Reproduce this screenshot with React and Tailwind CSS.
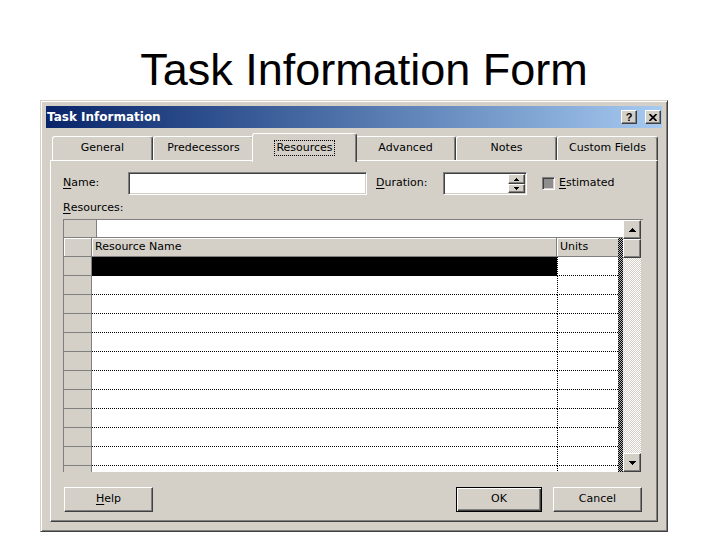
import React from "react";

const RAISED =
  "border border-t-white border-l-white border-r-[#404040] border-b-[#404040] shadow-[inset_-1px_-1px_#808080]";
const SUNKEN =
  "border border-t-[#808080] border-l-[#808080] border-r-white border-b-white shadow-[inset_1px_1px_#404040,inset_-1px_-1px_#d4d0c8]";

function U({ children }) {
  return <span className="underline decoration-1 underline-offset-[2px]">{children}</span>;
}

function Tri({ dir = "up", w = 7, h = 4 }) {
  const pts = dir === "up" ? `0,${h} ${w},${h} ${w / 2},0` : `0,0 ${w},0 ${w / 2},${h}`;
  return (
    <svg width={w} height={h} viewBox={`0 0 ${w} ${h}`} shapeRendering="crispEdges">
      <polygon points={pts} fill="#000" />
    </svg>
  );
}

const tabs = ["General", "Predecessors", "Resources", "Advanced", "Notes", "Custom Fields"];

export default function App() {
  return (
    <div className="w-[728px] h-[546px] bg-white flex flex-col overflow-hidden">
      <h1 className="pt-[47px] h-[92px] shrink-0 text-center text-[45px] leading-[45px] font-normal text-black font-['Liberation_Sans',Arial,sans-serif]">
        Task Information Form
      </h1>

      <div className="mt-[8px] ml-[40px] w-[628px] h-[432px] shrink-0 bg-[#d4d0c8] border border-t-[#d4d0c8] border-l-[#d4d0c8] border-r-[#404040] border-b-[#404040] shadow-[inset_1px_1px_#ffffff,inset_-1px_-1px_#808080] flex flex-col pt-[5px] px-[5px] font-['DejaVu_Sans',sans-serif] text-[11px] text-black">
        {/* Title bar */}
        <div className="h-[22px] shrink-0 bg-linear-to-r from-[#0a246a] to-[#a6caf0] flex items-center pl-[1px] pr-[1px]">
          <span className="font-bold text-white text-[12px] font-['DejaVu_Sans',sans-serif]">Task Information</span>
          <div className="ml-auto flex items-center">
            <div className={`w-[16px] h-[14px] bg-[#d4d0c8] ${RAISED} flex items-center justify-center mr-[8px]`}>
              <span className="font-bold text-[11px] leading-none font-['Liberation_Sans',sans-serif]">?</span>
            </div>
            <div className={`w-[16px] h-[14px] bg-[#d4d0c8] ${RAISED} flex items-center justify-center`}>
              <svg width="8" height="7" viewBox="0 0 8 7">
                <path d="M0.5 0 L7.5 7 M7.5 0 L0.5 7" stroke="#000" strokeWidth="1.7" />
              </svg>
            </div>
          </div>
        </div>

        {/* Tabs + panel */}
        <div className="mt-[5px] mx-[4px] flex flex-col">
          <div className="h-[27px] flex items-end pl-[2px]">
            {tabs.map((t) =>
              t === "Resources" ? (
                <div
                  key={t}
                  className="relative z-10 w-[105px] h-[29px] -mx-[2px] -mb-[2px] bg-[#d4d0c8] border-t border-l border-r border-t-white border-l-white border-r-[#404040] rounded-t-[3px] shadow-[inset_-1px_0_#808080] flex items-start justify-center pt-[6px]"
                >
                  <span className="border border-dotted border-black px-[1px] leading-[14px]">{t}</span>
                </div>
              ) : (
                <div
                  key={t}
                  className="w-[101px] h-[24px] border-t border-l border-r border-t-white border-l-white border-r-[#404040] rounded-t-[3px] shadow-[inset_-1px_0_#808080] flex items-center justify-center"
                >
                  {t}
                </div>
              )
            )}
          </div>

          <div className="h-[362px] border border-t-white border-l-white border-r-[#404040] border-b-[#404040] shadow-[inset_-1px_-1px_#808080] flex flex-col px-[12px] pt-[11px]">
            {/* Row 1 */}
            <div className="h-[23px] flex items-center">
              <div className="w-[65px]">
                <U>N</U>ame:
              </div>
              <div className={`w-[239px] h-[23px] bg-white ${SUNKEN}`} />
              <div className="ml-[9px] w-[67px]">
                <U>D</U>uration:
              </div>
              <div className={`w-[84px] h-[23px] bg-white ${SUNKEN} flex p-[1px]`}>
                <div className="flex-1" />
                <div className="w-[17px] flex flex-col">
                  <div className={`h-[10px] bg-[#d4d0c8] ${RAISED} flex items-center justify-center`}>
                    <Tri dir="up" w={5} h={3} />
                  </div>
                  <div className={`flex-1 bg-[#d4d0c8] ${RAISED} flex items-center justify-center`}>
                    <Tri dir="down" w={5} h={3} />
                  </div>
                </div>
              </div>
              <div className={`ml-[15px] w-[13px] h-[13px] bg-[#8e8e8e] ${SUNKEN}`} />
              <div className="ml-[4px]">
                <U>E</U>stimated
              </div>
            </div>

            {/* Resources label */}
            <div className="mt-[5px] h-[16px] flex items-center">
              <U>R</U>esources:
            </div>

            {/* Grid */}
            <div className="mt-[3px] w-[580px] h-[253px] border-t border-l border-t-[#808080] border-l-[#808080] flex overflow-hidden">
              <div className="w-[559px] flex flex-col">
                <div className="h-[18px] shrink-0 flex border-b border-[#808080]">
                  <div className="w-[33px] bg-[#d4d0c8] border-r border-[#808080]" />
                  <div className="flex-1 bg-white" />
                </div>
                <div className="flex-1 flex overflow-hidden">
                  <div className="w-[554px] flex flex-col">
                    <div className="flex h-[19px] shrink-0">
                      <div className="w-[28px] bg-[#d4d0c8] border-r border-b border-[#808080] shadow-[inset_1px_1px_#ffffff]" />
                      <div className="w-[465px] bg-[#d4d0c8] border-r border-b border-[#808080] shadow-[inset_1px_1px_#ffffff] pl-[3px] flex items-center">
                        Resource Name
                      </div>
                      <div className="w-[61px] bg-[#d4d0c8] border-b border-[#808080] shadow-[inset_1px_1px_#ffffff] pl-[3px] flex items-center">
                        Units
                      </div>
                    </div>
                    {Array.from({ length: 12 }).map((_, i) => (
                      <div key={i} className="flex h-[19px] shrink-0">
                        <div className="w-[28px] bg-[#d4d0c8] border-r border-b border-[#808080]" />
                        <div
                          className={
                            i === 0
                              ? "w-[465px] bg-black border-b border-dotted border-black"
                              : "w-[465px] bg-white border-b border-dotted border-black"
                          }
                        />
                        <div className="w-[61px] bg-white border-l border-b border-dotted border-black" />
                      </div>
                    ))}
                  </div>
                  <div className="w-[5px] bg-[image:repeating-conic-gradient(#000000_0%_25%,#b8b8b8_0%_50%)] bg-[length:2px_2px]" />
                </div>
              </div>
              {/* Scrollbar */}
              <div className="w-[18px] flex flex-col">
                <div className={`h-[19px] shrink-0 bg-[#d4d0c8] ${RAISED} flex items-center justify-center`}>
                  <Tri dir="up" />
                </div>
                <div className={`h-[19px] shrink-0 bg-[#d4d0c8] ${RAISED}`} />
                <div className="flex-1 bg-[image:repeating-conic-gradient(#ffffff_0%_25%,#d4d0c8_0%_50%)] bg-[length:2px_2px]" />
                <div className={`h-[19px] shrink-0 bg-[#d4d0c8] ${RAISED} flex items-center justify-center`}>
                  <Tri dir="down" />
                </div>
              </div>
              <div className="flex-1 bg-[#d4d0c8]" />
            </div>

            {/* Buttons */}
            <div className="mt-[15px] h-[25px] flex">
              <div className={`ml-[1px] w-[89px] h-[25px] bg-[#d4d0c8] ${RAISED} flex items-center justify-center`}>
                <span>
                  <U>H</U>elp
                </span>
              </div>
              <div className="ml-auto w-[86px] h-[25px] bg-[#d4d0c8] border border-black shadow-[inset_1px_1px_#ffffff,inset_-1px_-1px_#404040,inset_-2px_-2px_#808080] flex items-center justify-center">
                OK
              </div>
              <div className={`ml-[11px] mr-[3px] w-[89px] h-[25px] bg-[#d4d0c8] ${RAISED} flex items-center justify-center`}>
                Cancel
              </div>
            </div>
          </div>
        </div>
      </div>
    </div>
  );
}
